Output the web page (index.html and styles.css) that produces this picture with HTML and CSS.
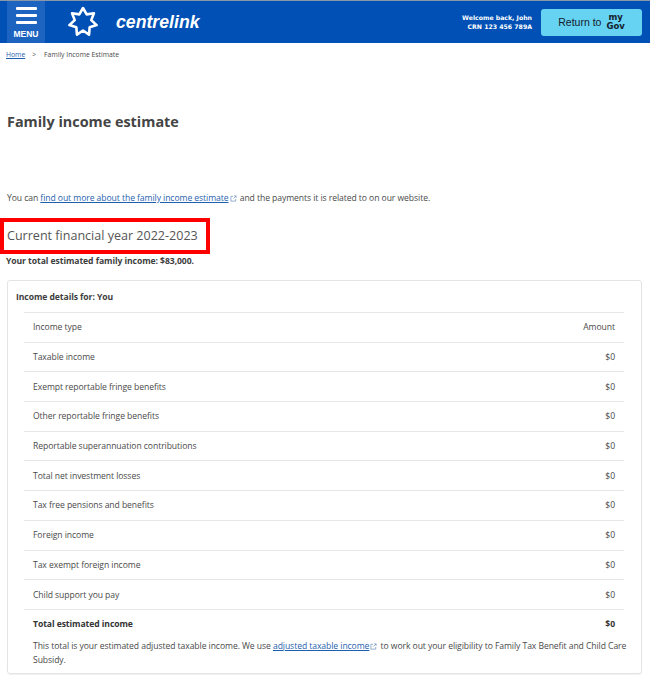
FILE: index.html
```html
<!DOCTYPE html>
<html lang="en">
<head>
<meta charset="utf-8">
<title>Family income estimate</title>
<link rel="stylesheet" href="styles.css">
</head>
<body>
<header class="topbar">
  <div class="brand">
    <button class="menu"><span class="bars"><i></i><i></i><i></i></span><span class="menu-label">MENU</span></button>
    <svg class="star" viewBox="0 0 32 32" width="32" height="32"><path d="M16 2L19.680 8.340 26.950 7.270 24.270 14.110 29.650 19.100 22.640 21.290 22.070 28.600 16 24.500 9.930 28.600 9.360 21.290 2.350 19.100 7.730 14.110 5.050 7.270 12.320 8.340Z" fill="none" stroke="#fff" stroke-width="2.600" stroke-linejoin="round"/></svg>
    <span class="wordmark">centrelink</span>
  </div>
  <div class="account">
    <div class="welcome"><div>Welcome back, John</div><div>CRN 123 456 789A</div></div>
    <a class="return"><span>Return to</span><span class="mygov"><span>my</span><span>Gov</span></span></a>
  </div>
</header>
<nav class="crumbs"><a href="#">Home</a><span class="sep">&gt;</span><span>Family Income Estimate</span></nav>
<main class="page">
  <h1>Family income estimate</h1>
  <p class="intro">You can <a href="#">find out more about the family income estimate</a><svg class="ext" viewBox="0 0 8 8" width="7" height="7"><path d="M6.500 4.500v2.500h-5.500v-5.500h2.500M4 4l3-3M4.800 1h2.200v2.200" fill="none" stroke="#6f8fbf" stroke-width=".8"/></svg> and the payments it is related to on our website.</p>
  <div class="highlight"><h2>Current financial year 2022-2023</h2></div>
  <p class="total">Your total estimated family income: $83,000.</p>
  <section class="card">
    <h3>Income details for: You</h3>
    <div class="rows">
      <div class="row"><span>Income type</span><span>Amount</span></div>
      <div class="row"><span>Taxable income</span><span>$0</span></div>
      <div class="row"><span>Exempt reportable fringe benefits</span><span>$0</span></div>
      <div class="row"><span>Other reportable fringe benefits</span><span>$0</span></div>
      <div class="row"><span>Reportable superannuation contributions</span><span>$0</span></div>
      <div class="row"><span>Total net investment losses</span><span>$0</span></div>
      <div class="row"><span>Tax free pensions and benefits</span><span>$0</span></div>
      <div class="row"><span>Foreign income</span><span>$0</span></div>
      <div class="row"><span>Tax exempt foreign income</span><span>$0</span></div>
      <div class="row"><span>Child support you pay</span><span>$0</span></div>
      <div class="row strong"><span>Total estimated income</span><span>$0</span></div>
    </div>
    <p class="note">This total is your estimated adjusted taxable income. We use <a href="#">adjusted taxable income</a><svg class="ext" viewBox="0 0 8 8" width="7" height="7"><path d="M6.500 4.500v2.500h-5.500v-5.500h2.500M4 4l3-3M4.800 1h2.200v2.200" fill="none" stroke="#6f8fbf" stroke-width=".8"/></svg> to work out your eligibility to Family Tax Benefit and Child Care <span class="note-end">Subsidy.</span></p>
  </section>
</main>
</body>
</html>
```
FILE: styles.css
```css
* { box-sizing: border-box; }
html, body { margin: 0; padding: 0; }
body {
  width: 650px;
  height: 679px;
  overflow: hidden;
  background: #fff;
  color: #4a4a4a;
  font-family: "Open Sans", "Noto Sans", sans-serif;
  font-size: 8.600px;
  letter-spacing: -.07px;
}
a { color: #1f5fae; }
.topbar {
  height: 43px;
  background: #0050b5;
  border-top: 1px solid #8a97a8;
  display: flex;
  justify-content: space-between;
  align-items: center;
  padding-right: 8px;
  letter-spacing: 0;
}
.brand { display: flex; align-items: center; height: 100%; padding-left: 7px; }
.menu {
  width: 38px;
  height: 42px;
  border: 0;
  padding: 6px 0 0;
  background: #1d64c0;
  color: #fff;
  display: flex;
  flex-direction: column;
  align-items: center;
}
.bars { display: flex; flex-direction: column; gap: 4px; }
.bars i { display: block; width: 21px; height: 3px; background: #fff; border-radius: 1px; }
.menu-label {
  margin-top: 5px;
  font-family: "Liberation Sans", sans-serif;
  font-size: 8.500px;
  font-weight: 700;
  line-height: 10px;
}
.star { margin-left: 22px; }
.wordmark {
  margin-left: 17px;
  color: #fff;
  font-family: "Liberation Sans", sans-serif;
  font-size: 17.700px;
  font-weight: 700;
  font-style: italic;
}
.account { display: flex; align-items: center; gap: 9px; }
.welcome {
  color: #fff;
  font-family: "DejaVu Sans", sans-serif;
  font-size: 6.200px;
  font-weight: 700;
  line-height: 9px;
  text-align: right;
}
.return {
  width: 101px;
  height: 27px;
  background: #66d3f3;
  border-radius: 3px;
  color: #14202c;
  display: flex;
  align-items: center;
  justify-content: center;
  gap: 5px;
  font-family: "Liberation Sans", sans-serif;
  font-size: 10.500px;
}
.mygov {
  display: flex;
  flex-direction: column;
  align-items: center;
  font-family: "DejaVu Sans", sans-serif;
  font-size: 8.500px;
  font-weight: 700;
  line-height: 9px;
}
.crumbs {
  height: 24px;
  padding: 7px 0 0 6px;
  font-size: 6.800px;
  letter-spacing: 0;
  line-height: 9px;
  display: flex;
}
.sep { margin: 0 8px 0 7px; }
.page { padding: 0 8px 0 7px; }
h1 {
  margin: 43px 0 0;
  font-size: 14.400px;
  font-weight: 700;
  letter-spacing: 0;
  line-height: 24px;
  color: #444;
}
.intro { margin: 57px 0 0; line-height: 14px; white-space: nowrap; }
.ext { margin: 0 1px; vertical-align: -1px; }
.highlight {
  margin: 13px 0 0 -7px;
  width: 210px;
  height: 36px;
  border: 4px solid #f00;
  padding-left: 3px;
  display: flex;
  align-items: center;
}
h2 {
  margin: 0;
  font-size: 12.550px;
  font-weight: 400;
  letter-spacing: 0;
  line-height: 20px;
  white-space: nowrap;
  color: #555;
}
.total { margin: 0 0 0 -1px; font-weight: 700; line-height: 14px; color: #3d3d3d; }
.card {
  margin: 12px 0 0;
  width: 635px;
  height: 394px;
  border: 1px solid #e4e4e4;
  border-radius: 3px;
  box-shadow: 0 1px 1px rgba(0,0,0,.06);
}
h3 { margin: 0; height: 31px; padding-left: 8px; font-size: 8.600px; font-weight: 700; line-height: 32px; color: #3d3d3d; }
.rows { margin: 0 17px 0 16px; }
.row {
  height: 29.700px;
  border-top: 1px solid #e6e6e6;
  display: flex;
  justify-content: space-between;
  align-items: center;
  padding: 0 9px;
}
.strong { font-weight: 700; color: #333; }
.note { margin: 0 10px 0 25px; line-height: 14px; }
.note-end { display: block; }
```
